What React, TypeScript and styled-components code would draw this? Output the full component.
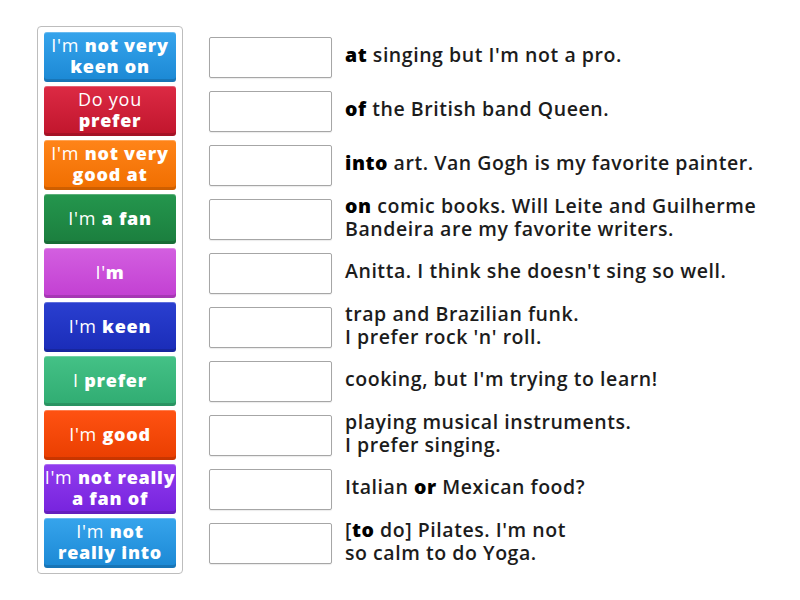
import React from 'react';
import styled, { createGlobalStyle } from 'styled-components';

const GlobalStyle = createGlobalStyle`
  html, body {
    margin: 0;
    padding: 0;
    background: #ffffff;
  }
  body {
    font-family: 'Open Sans', 'Noto Sans', sans-serif;
  }
`;

interface Pair {
  label: React.ReactNode;
  color: string;
  dark: string;
  text: React.ReactNode;
}

const pairs: Pair[] = [
  {
    label: (
      <>
        I'm <b>not very</b>
        <br />
        <b>keen on</b>
      </>
    ),
    color: '#36a4ec',
    dark: '#1b88d4',
    text: (
      <>
        <b>at</b> singing but I'm not a pro.
      </>
    ),
  },
  {
    label: (
      <>
        Do you
        <br />
        <b>prefer</b>
      </>
    ),
    color: '#dc2a44',
    dark: '#c0152c',
    text: (
      <>
        <b>of</b> the British band Queen.
      </>
    ),
  },
  {
    label: (
      <>
        I'm <b>not very</b>
        <br />
        <b>good at</b>
      </>
    ),
    color: '#ff8419',
    dark: '#f06e00',
    text: (
      <>
        <b>into</b> art. Van Gogh is my favorite painter.
      </>
    ),
  },
  {
    label: (
      <>
        I'm <b>a fan</b>
      </>
    ),
    color: '#24964d',
    dark: '#1b7e3e',
    text: (
      <>
        <b>on</b> comic books. Will Leite and Guilherme
        <br />
        Bandeira are my favorite writers.
      </>
    ),
  },
  {
    label: (
      <>
        I'<b>m</b>
      </>
    ),
    color: '#d35fe0',
    dark: '#c23fd2',
    text: <>Anitta. I think she doesn't sing so well.</>,
  },
  {
    label: (
      <>
        I'm <b>keen</b>
      </>
    ),
    color: '#2a3fd0',
    dark: '#1a2cb8',
    text: (
      <>
        trap and Brazilian funk.
        <br />I prefer rock 'n' roll.
      </>
    ),
  },
  {
    label: (
      <>
        I <b>prefer</b>
      </>
    ),
    color: '#44c186',
    dark: '#30ac72',
    text: <>cooking, but I'm trying to learn!</>,
  },
  {
    label: (
      <>
        I'm <b>good</b>
      </>
    ),
    color: '#ff5212',
    dark: '#e93e00',
    text: (
      <>
        playing musical instruments.
        <br />I prefer singing.
      </>
    ),
  },
  {
    label: (
      <>
        I'm <b>not really</b>
        <br />
        <b>a fan of</b>
      </>
    ),
    color: '#913cee',
    dark: '#7623dd',
    text: (
      <>
        Italian <b>or</b> Mexican food?
      </>
    ),
  },
  {
    label: (
      <>
        I'm <b>not</b>
        <br />
        <b>really into</b>
      </>
    ),
    color: '#36a4ec',
    dark: '#1b88d4',
    text: (
      <>
        [<b>to</b> do] Pilates. I'm not
        <br />
        so calm to do Yoga.
      </>
    ),
  },
];

const Page = styled.div`
  display: flex;
  align-items: flex-start;
  gap: 26px;
  padding: 26px 0 0 37px;
`;

const Bank = styled.div`
  display: flex;
  flex-direction: column;
  gap: 4px;
  padding: 5px 6px;
  border: 1px solid #bdbdbd;
  border-radius: 4px;
  background: #fff;
`;

const Tile = styled.div<{ $color: string; $dark: string }>`
  width: 132px;
  height: 50px;
  box-sizing: border-box;
  display: flex;
  align-items: center;
  justify-content: center;
  text-align: center;
  white-space: nowrap;
  padding: 0 0 2px;
  border-radius: 3px;
  background: linear-gradient(to bottom, ${p => p.$color} 0%, ${p => p.$dark} 100%);
  box-shadow: inset 0 1px 0 rgba(255, 255, 255, 0.25), inset 0 -3px 0 rgba(0, 0, 0, 0.14);
  color: #fff;
  font-size: 18px;
  font-weight: 500;
  letter-spacing: 0.75px;
  line-height: 21px;
  b {
    font-weight: 800;
  }
`;

const Rows = styled.div`
  display: flex;
  flex-direction: column;
  gap: 4px;
  padding-top: 6px;
`;

const Row = styled.div`
  height: 50px;
  display: flex;
  align-items: center;
  gap: 13px;
`;

const Slot = styled.div`
  flex: none;
  width: 123px;
  height: 41px;
  box-sizing: border-box;
  border: 1px solid #a6a6a6;
  border-radius: 2px;
  background: #fff;
  box-shadow: 0 1px 1px rgba(0, 0, 0, 0.08);
`;

const Clue = styled.div`
  white-space: nowrap;
  padding-bottom: 5px;
  color: #1c1c1c;
  font-size: 19.5px;
  font-weight: 600;
  letter-spacing: 0.55px;
  line-height: 23px;
  b {
    font-weight: 800;
    color: #000;
  }
`;

export default function App() {
  return (
    <>
      <GlobalStyle />
      <Page>
        <Bank>
          {pairs.map((p, i) => (
            <Tile key={i} $color={p.color} $dark={p.dark}>
              <span>{p.label}</span>
            </Tile>
          ))}
        </Bank>
        <Rows>
          {pairs.map((p, i) => (
            <Row key={i}>
              <Slot />
              <Clue>{p.text}</Clue>
            </Row>
          ))}
        </Rows>
      </Page>
    </>
  );
}
